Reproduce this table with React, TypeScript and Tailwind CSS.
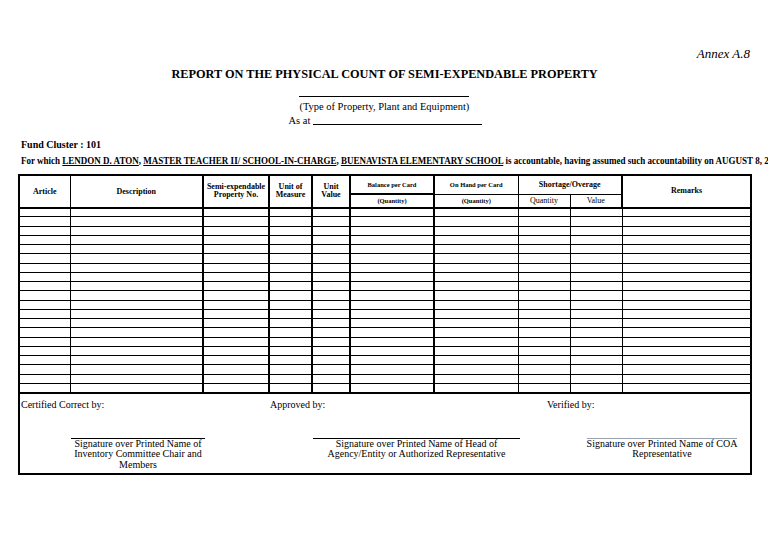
const cols = [51, 133, 66, 43, 38, 84, 84, 52, 52, 129];
const rows = Array.from({ length: 20 }, (_, i) => i);

function Sig({ lines, lineClass }: { lines: string[]; lineClass?: string }) {
  return (
    <div className="flex flex-col items-center">
      <div className={lineClass ?? 'h-px w-full bg-black'} />
      <div className="whitespace-nowrap text-center text-[10px] leading-[10.5px]">
        {lines.map((l) => (
          <div key={l}>{l}</div>
        ))}
      </div>
    </div>
  );
}

export default function App() {
  return (
    <div
      className="h-[543px] w-[768px] overflow-hidden bg-white text-black"
      style={{ fontFamily: '"Liberation Serif", "Times New Roman", serif' }}
    >
      {/* top heading */}
      <div className="pt-[46px] pr-[18px] text-right text-[13px] italic leading-[16px]">Annex A.8</div>
      <div className="mt-[4px] flex justify-center pl-[2px]">
        <div className="origin-center scale-x-[0.945] whitespace-nowrap text-[13px] font-bold leading-[16px]">
          REPORT ON THE PHYSICAL COUNT OF SEMI-EXPENDABLE PROPERTY
        </div>
      </div>
      <div className="mt-[14px] flex flex-col items-center">
        <div className="h-px w-[170px] bg-black" />
        <div className="mt-[2px] scale-x-[0.95] whitespace-nowrap text-[11px] leading-[14px]">
          (Type of Property, Plant and Equipment)
        </div>
        <div className="flex items-end gap-[2px] pl-[2px] text-[11px] leading-[14px]">
          <span className="scale-x-[0.95]">As at</span>
          <span className="mb-[2px] h-px w-[169px] bg-black" />
        </div>
      </div>
      <div className="mt-[12px] pl-[21px] text-[10px] font-bold leading-[12px]">Fund Cluster : 101</div>
      <div className="mt-[4px] pl-[21px] whitespace-nowrap">
        <div className="origin-left scale-x-[0.9] text-[10px] font-bold leading-[12px]">
          For which <span className="underline">LENDON D. ATON</span>,{' '}
          <span className="underline">MASTER TEACHER II/ SCHOOL-IN-CHARGE</span>,{' '}
          <span className="underline">BUENAVISTA ELEMENTARY SCHOOL</span> is accountable, having assumed such
          accountability on AUGUST 8, 2
        </div>
      </div>

      {/* table */}
      <table className="ml-[18px] mt-[7px] table-fixed border-collapse border-2 border-black">
        <colgroup>
          {cols.map((w, i) => (
            <col key={i} style={{ width: w }} />
          ))}
        </colgroup>
        <thead>
          <tr className="h-[19px]">
            <th rowSpan={2} className="border border-black text-[8px] font-bold leading-[9px]">Article</th>
            <th rowSpan={2} className="border border-black text-[8px] font-bold leading-[9px]">Description</th>
            <th rowSpan={2} className="border-2 border-black text-[8px] font-bold leading-[8px]">
              Semi-expendable
              <br />
              Property No.
            </th>
            <th rowSpan={2} className="border border-black text-[8px] font-bold leading-[8px]">
              Unit of
              <br />
              Measure
            </th>
            <th rowSpan={2} className="border-2 border-black text-[8px] font-bold leading-[8px]">
              Unit
              <br />
              Value
            </th>
            <th className="border-2 border-black text-[6.5px] font-bold">Balance per Card</th>
            <th className="border border-black text-[6.5px] font-bold">On Hand per Card</th>
            <th colSpan={2} className="border border-black text-[8px] font-bold">Shortage/Overage</th>
            <th rowSpan={2} className="border-2 border-black text-[8px] font-bold">Remarks</th>
          </tr>
          <tr className="h-[13px] border-b-2 border-black">
            <th className="border-2 border-black text-[6.5px] font-bold">(Quantity)</th>
            <th className="border border-black text-[6.5px] font-bold">(Quantity)</th>
            <th className="border border-black text-[8px] font-normal">Quantity</th>
            <th className="border border-black text-[8px] font-normal">Value</th>
          </tr>
        </thead>
        <tbody>
          {rows.map((r) => (
            <tr key={r} className="h-[9.25px]">
              {cols.map((_, c) => (
                <td
                  key={c}
                  className={
                    c === 2 || c === 4 || c === 5
                      ? 'border-x-2 border-y border-black p-0'
                      : 'border border-black p-0'
                  }
                />
              ))}
            </tr>
          ))}
          <tr>
            <td colSpan={10} className="h-[81px] border-2 border-black p-0 align-top">
              <div className="flex h-full flex-col">
                <div className="flex pt-[5px] text-[10px] leading-[12px]">
                  <div className="w-[250px] pl-[1px]">Certified Correct by:</div>
                  <div className="w-[277px]">Approved by:</div>
                  <div>Verified by:</div>
                </div>
                <div className="mt-[27px] flex">
                  <div className="ml-[51px] w-[134px]">
                    <Sig lines={['Signature over Printed Name of', 'Inventory Committee Chair and', 'Members']} />
                  </div>
                  <div className="ml-[108px] w-[207px]">
                    <Sig lines={['Signature over Printed Name of Head of', 'Agency/Entity or Authorized Representative']} />
                  </div>
                  <div className="ml-[67px] w-[150px]">
                    <Sig
                      lineClass="h-px w-full bg-gray-400"
                      lines={['Signature over Printed Name of COA', 'Representative']}
                    />
                  </div>
                </div>
              </div>
            </td>
          </tr>
        </tbody>
      </table>
    </div>
  );
}
